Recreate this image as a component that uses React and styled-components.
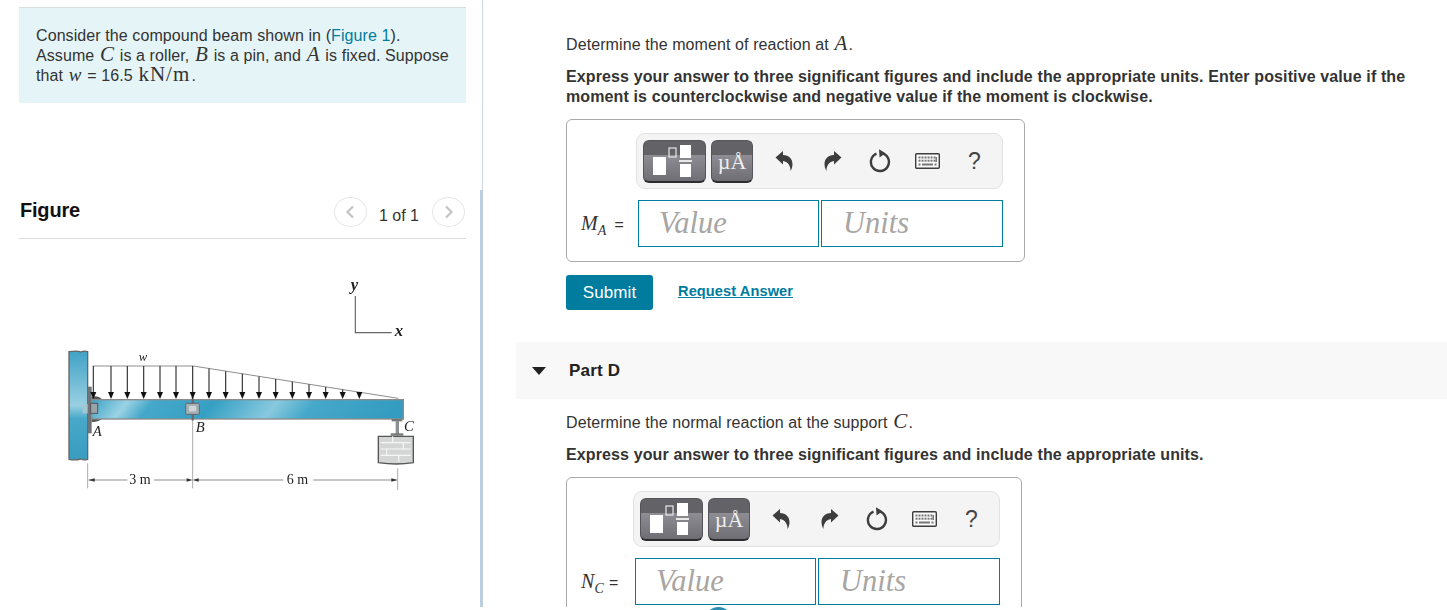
import React from "react";
import styled, { createGlobalStyle } from "styled-components";

const GlobalStyle = createGlobalStyle`
  html, body {
    margin: 0;
    padding: 0;
    background: #fff;
    overflow: hidden;
  }
  body {
    font-family: "Liberation Sans", Arial, sans-serif;
    font-size: 16px;
    line-height: 20px;
    letter-spacing: 0.09px;
    color: #333;
  }
`;

const Page = styled.div`
  width: 1447px;
  height: 607px;
  display: flex;
  overflow: hidden;
`;

const LeftColumn = styled.div`
  width: 483px;
  flex: none;
  box-sizing: border-box;
  padding: 7px 16px 0 19px;
  position: relative;
  border-right: 1px solid #c8d8e6;
  height: 607px;
`;

const RuleDark = styled.div`
  position: absolute;
  right: -1px;
  top: 190px;
  bottom: 0;
  width: 3px;
  background: #bccfe0;
`;

const Intro = styled.div`
  border-top: 1px solid #d9dfe0;
  background: #e5f5f7;
  height: 96px;
  box-sizing: border-box;
  padding: 18px 10px 0 17px;
  white-space: nowrap;
`;

const FigureHeader = styled.div`
  margin-top: 92px;
  height: 43px;
  display: flex;
  justify-content: space-between;
  border-bottom: 1px solid #d9dcdf;
`;

const FigureTitle = styled.div`
  font-size: 20px;
  font-weight: bold;
  letter-spacing: -0.2px;
  color: #111;
  margin: 5px 0 0 1px;
`;

const Pager = styled.div`
  display: flex;
  align-items: flex-start;
  font-size: 16px;
  letter-spacing: 0;
  margin-right: 1px;
`;

const PagerText = styled.span`
  margin: 11px 13px 0 12px;
`;

const PagerButton = styled.span`
  width: 31px;
  height: 28px;
  margin-top: 2px;
  border: 1px solid #e6e6e6;
  border-radius: 50%;
  display: flex;
  align-items: center;
  justify-content: center;
`;

const FigureWrap = styled.div`
  margin: 31px 0 0 21px;
  line-height: 0;
  svg {
    filter: blur(0.5px);
  }
`;

const RightColumn = styled.div`
  flex: 1;
  min-width: 0;
  padding: 25px 0 0 33px;
`;

const PartBody = styled.div`
  padding-left: 50px;
`;

const Prompt = styled.div`
  margin-top: ${(p) => p.$top}px;
`;

const Instruction = styled.div`
  margin-top: 12px;
  font-weight: bold;
  letter-spacing: 0.12px;
  width: 860px;
`;

const AnswerBox = styled.div`
  margin-top: 12px;
  display: inline-block;
  box-sizing: border-box;
  border: 1px solid #aaa;
  border-radius: 6px;
  padding: 13px 21px 14px 14px;
`;

const Toolbar = styled.div`
  width: 367px;
  height: 56px;
  box-sizing: border-box;
  margin-left: ${(p) => p.$labelWidth - 2}px;
  border: 1px solid #e2e2e2;
  border-radius: 9px;
  background: #f4f4f4;
  display: flex;
  align-items: center;
  padding: 0 0 0 6px;
`;

const PaletteButton = styled.div`
  width: ${(p) => p.$width}px;
  height: 43px;
  margin-right: 5px;
  box-sizing: border-box;
  border-radius: 6px;
  border: 1px solid #55545a;
  border-bottom: 2px solid #2d2d30;
  background: linear-gradient(
    #636267 0,
    #636267 14px,
    #8e8d94 14px,
    #6f6e74 100%
  );
  display: flex;
  align-items: center;
  justify-content: center;
  overflow: hidden;
`;

const MuGlyph = styled.span`
  font-family: "Liberation Serif", serif;
  font-size: 22px;
  letter-spacing: 0;
  line-height: 30px;
  color: #eee;
  margin-top: 3px;
`;

const ToolSlot = styled.span`
  width: ${(p) => p.$width}px;
  display: flex;
  justify-content: center;
  align-items: center;
`;

const Help = styled.span`
  font-size: 23px;
  color: #444;
  line-height: 24px;
`;

const InputRow = styled.div`
  display: flex;
  align-items: center;
  margin-top: 11px;
`;

const RowLabel = styled.div`
  width: ${(p) => p.$width}px;
  flex: none;
  box-sizing: border-box;
  font-family: "Liberation Serif", serif;
  font-size: 20px;
  font-style: italic;
  white-space: nowrap;
`;

const Sub = styled.sub`
  font-size: 14px;
  vertical-align: -5px;
  line-height: 0;
`;

const Equals = styled.span`
  font-family: "Liberation Sans", sans-serif;
  font-style: normal;
  font-size: 16px;
  margin-left: ${(p) => p.$gap}px;
`;

const Field = styled.span`
  width: ${(p) => p.$width}px;
  height: 47px;
  box-sizing: border-box;
  border: 1px solid #007c9e;
  margin-right: 2px;
  padding-left: ${(p) => p.$pad}px;
  font-family: "Liberation Serif", serif;
  font-style: italic;
  font-size: 30.5px;
  letter-spacing: 0;
  line-height: 45px;
  color: #a8a5a2;
  &:last-child {
    margin-right: 0;
  }
`;

const ActionRow = styled.div`
  display: flex;
  align-items: center;
  margin-top: 13px;
`;

const SubmitButton = styled.button`
  width: 87px;
  height: 35px;
  border: 0;
  border-radius: 3px;
  background: #007c9e;
  color: #fff;
  font: 17px "Liberation Sans", sans-serif;
  letter-spacing: 0.1px;
  padding: 0;
`;

const RequestLink = styled.a`
  margin: 0 0 4px 25px;
  font-size: 14.6px;
  font-weight: bold;
  color: #007c9e;
  text-decoration: underline;
`;

const PartBar = styled.div`
  margin-top: 32px;
  height: 57px;
  background: #f8f8f8;
  display: flex;
  align-items: center;
  padding-left: 16px;
`;

const PartTitle = styled.div`
  margin-left: 23px;
  font-size: 17px;
  font-weight: bold;
  letter-spacing: 0.2px;
  color: #222;
`;

const Mi = styled.span`
  font-family: "Liberation Serif", serif;
  font-style: ${(p) => (p.$upright ? "normal" : "italic")};
  font-size: ${(p) => p.$size || 21}px;
  letter-spacing: ${(p) => (p.$upright ? 1 : 0)}px;
  line-height: 0;
  margin: 0 1.2px;
`;

const InlineLink = styled.span`
  color: #007c9e;
`;

// top of a round control that sits just under the visible part of the page
const BottomArc = styled.div`
  position: absolute;
  left: 705px;
  top: 607px;
  width: 27px;
  height: 27px;
  border-radius: 50%;
  background: #2a8fb0;
`;

const Chevron = ({ left }) => (
  <svg width="10" height="14" viewBox="0 0 10 14">
    <path
      d={left ? "M8 1.5 L2.5 7 L8 12.5" : "M2 1.5 L7.5 7 L2 12.5"}
      fill="none"
      stroke="#c4c4c4"
      strokeWidth="2.2"
    />
  </svg>
);

const TemplateIcon = () => (
  <svg width="61" height="40" viewBox="0 0 61 40">
    <rect x="9" y="16" width="13" height="18" fill="#fff" />
    <rect x="25" y="7" width="7" height="9" fill="none" stroke="#e8e8e8" strokeWidth="1.2" />
    <rect x="36" y="4" width="11" height="13" fill="#fff" />
    <rect x="35" y="19" width="13" height="2" fill="#e8e8e8" />
    <rect x="36" y="23" width="11" height="13" fill="#fff" />
  </svg>
);

const UndoIcon = ({ flip }) => (
  <svg
    width="18"
    height="22"
    viewBox="0 0 18 22"
    style={flip ? { transform: "scaleX(-1)" } : undefined}
  >
    <path
      d="M0.5 7.5 L8 1 L8 5 C14 5 17.5 9 17.5 14 C17.5 17 16.5 19.5 15.5 21 C15.8 17 13.5 11.5 8 11 L8 14.5 Z"
      fill="#3d3d3d"
    />
  </svg>
);

const ResetIcon = () => (
  <svg width="22" height="24" viewBox="0 0 22 24">
    <path
      d="M13.5 4.4 A9 9 0 1 1 7.5 4.7"
      fill="none"
      stroke="#3d3d3d"
      strokeWidth="2.4"
    />
    <path d="M10 0.2 L16.5 4.2 L10.5 8.5 Z" fill="#3d3d3d" />
  </svg>
);

const KeyboardIcon = () => (
  <svg width="25" height="16" viewBox="0 0 25 16">
    <rect x="0.7" y="0.7" width="23.6" height="14.6" rx="1" fill="#fbfbfb" stroke="#3d3d3d" strokeWidth="1.4" />
    {[3.5, 6.5, 9.5, 12.5, 15.5, 18.5].map((x) => (
      <rect key={x} x={x} y="3.5" width="2" height="2" fill="#777" />
    ))}
    {[3.5, 6.5, 9.5, 12.5, 15.5, 18.5].map((x) => (
      <rect key={x} x={x} y="6.7" width="2" height="2" fill="#777" />
    ))}
    <rect x="3.5" y="10.5" width="2" height="2" fill="#777" />
    <rect x="7" y="10.5" width="11" height="2" fill="#777" />
    <rect x="19.5" y="10.5" width="2" height="2" fill="#777" />
    <rect x="20.5" y="4" width="1.5" height="5" fill="#777" />
  </svg>
);

const Tools = ({ labelWidth }) => (
  <Toolbar $labelWidth={labelWidth}>
    <PaletteButton $width={63}>
      <TemplateIcon />
    </PaletteButton>
    <PaletteButton $width={42}>
      <MuGlyph>µÅ</MuGlyph>
    </PaletteButton>
    <ToolSlot $width={51}>
      <UndoIcon />
    </ToolSlot>
    <ToolSlot $width={47}>
      <UndoIcon flip />
    </ToolSlot>
    <ToolSlot $width={48}>
      <ResetIcon />
    </ToolSlot>
    <ToolSlot $width={47}>
      <KeyboardIcon />
    </ToolSlot>
    <ToolSlot $width={47}>
      <Help>?</Help>
    </ToolSlot>
  </Toolbar>
);

const arrowXs = [160, 213, 262, 311, 360, 408, 458, 507, 557, 607, 657, 707, 757, 807, 857, 908, 958];

// load height falls linearly from B to the roller
const loadTop = (x) => (x <= 458 ? 288 : 288 + ((x - 458) / (1075 - 458)) * 97);

const BeamFigure = () => (
  <svg width="400" height="230" viewBox="0 0 1200 690">
    <defs>
      <linearGradient id="beamFill" x1="0" y1="0" x2="1" y2="0.05">
        <stop offset="0" stopColor="#3aa2c6" />
        <stop offset="0.12" stopColor="#9bd2e4" />
        <stop offset="0.2" stopColor="#45a8ca" />
        <stop offset="0.4" stopColor="#36a0c4" />
        <stop offset="0.6" stopColor="#88c9de" />
        <stop offset="0.72" stopColor="#46a8ca" />
        <stop offset="1" stopColor="#339cc0" />
      </linearGradient>
      <linearGradient id="wallFill" x1="0" y1="0" x2="0" y2="1">
        <stop offset="0" stopColor="#3fa2c5" />
        <stop offset="0.5" stopColor="#9ad0e2" />
        <stop offset="0.62" stopColor="#48a8c9" />
        <stop offset="1" stopColor="#389cc0" />
      </linearGradient>
    </defs>

    <path
      d="M87 245 Q115 241 122 246 Q132 241 143 245 L143 568 Q132 572 122 567 Q105 572 87 568 Z"
      fill="url(#wallFill)"
      stroke="#666"
      strokeWidth="4"
    />
    <rect x="143" y="350" width="12" height="140" fill="#6d7377" />
    <path d="M155 380 Q175 376 186 388 L155 388 Z M155 447 L186 447 Q172 458 155 455 Z" fill="#555" />
    <rect x="155" y="389" width="935" height="58" fill="url(#beamFill)" stroke="#8a8a8a" strokeWidth="4" />
    <rect x="152" y="400" width="21" height="30" fill="#9aa4a8" stroke="#555" strokeWidth="3" />
    <rect x="128" y="402" width="15" height="28" fill="#a5c5d0" />
    <rect x="455" y="380" width="6" height="72" fill="#666" />
    <rect x="437" y="400" width="41" height="33" rx="3" fill="#a5b0b5" stroke="#666" strokeWidth="3" />
    <rect x="447" y="408" width="21" height="16" fill="#d0d6d8" />

    <path d="M158 288 L460 288 L1075 385" fill="none" stroke="#777" strokeWidth="2.5" />
    {arrowXs.map((x) => (
      <g key={x}>
        <line x1={x} y1={loadTop(x)} x2={x} y2="372" stroke="#333" strokeWidth="3.5" />
        <path d={`M${x - 9} 366 L${x + 9} 366 L${x} 387 Z`} fill="#111" />
      </g>
    ))}

    <rect x="1055" y="447" width="32" height="7" fill="#777" />
    <rect x="1067" y="452" width="10" height="40" fill="#8a9094" />
    <rect x="1052" y="490" width="38" height="7" fill="#777" />
    <path
      d="M1015 499 L1120 499 L1120 578 Q1070 586 1015 578 Z"
      fill="#d4d6d6"
      stroke="#555"
      strokeWidth="4"
    />
    <path
      d="M1022 518 H1112 M1022 537 H1112 M1022 556 H1112 M1058 499 V518 M1090 518 V537 M1040 537 V556 M1076 556 V576"
      stroke="#f6f6f6"
      strokeWidth="3.5"
      fill="none"
    />

    <path d="M946 78 L946 188 L1055 188" fill="none" stroke="#666" strokeWidth="3.5" />

    <path d="M143 580 V655 M458 452 V655 M1073 595 V660" stroke="#999" strokeWidth="2.5" />
    <path
      d="M146 630 H262 M342 630 H446 M470 630 H730 M820 630 H1070"
      stroke="#777"
      strokeWidth="2.5"
    />
    <path d="M146 630 L164 625 L164 635 Z M458 630 L440 625 L440 635 Z M458 630 L476 625 L476 635 Z M1072 630 L1054 625 L1054 635 Z" fill="#333" />

    <g fontFamily="Liberation Serif, serif" fill="#222" letterSpacing="0">
      <text x="296" y="273" fontSize="38" fontStyle="italic">w</text>
      <text x="932" y="60" fontSize="50" fontStyle="italic" fontWeight="bold">y</text>
      <text x="1064" y="198" fontSize="50" fontStyle="italic" fontWeight="bold">x</text>
      <text x="158" y="497" fontSize="44" fontStyle="italic">A</text>
      <text x="467" y="487" fontSize="44" fontStyle="italic">B</text>
      <text x="1092" y="484" fontSize="44" fontStyle="italic">C</text>
      <text x="268" y="643" fontSize="42">3 m</text>
      <text x="740" y="643" fontSize="42">6 m</text>
    </g>
  </svg>
);

const App = () => (
  <>
    <GlobalStyle />
    <Page>
      <LeftColumn>
        <RuleDark />
        <Intro>
          Consider the compound beam shown in (<InlineLink>Figure 1</InlineLink>).
          <br />
          Assume <Mi>C</Mi> is a roller, <Mi>B</Mi> is a pin, and <Mi>A</Mi> is fixed. Suppose
          <br />
          that <Mi $size={19}>w</Mi> = 16.5 <Mi $upright>kN/m</Mi>.
        </Intro>
        <FigureHeader>
          <FigureTitle>Figure</FigureTitle>
          <Pager>
            <PagerButton>
              <Chevron left />
            </PagerButton>
            <PagerText>1 of 1</PagerText>
            <PagerButton>
              <Chevron />
            </PagerButton>
          </Pager>
        </FigureHeader>
        <FigureWrap>
          <BeamFigure />
        </FigureWrap>
      </LeftColumn>

      <RightColumn>
        <PartBody>
          <Prompt $top={10}>
            Determine the moment of reaction at <Mi>A</Mi>.
          </Prompt>
          <Instruction>
            Express your answer to three significant figures and include the appropriate units.
            Enter positive value if the moment is counterclockwise and negative value if the moment
            is clockwise.
          </Instruction>
          <AnswerBox>
            <Tools labelWidth={57} />
            <InputRow>
              <RowLabel $width={57}>
                M<Sub>A</Sub>
                <Equals $gap={8}>=</Equals>
              </RowLabel>
              <Field $width={181} $pad={20}>Value</Field>
              <Field $width={182} $pad={21}>Units</Field>
            </InputRow>
          </AnswerBox>
          <ActionRow>
            <SubmitButton>Submit</SubmitButton>
            <RequestLink>Request Answer</RequestLink>
          </ActionRow>
        </PartBody>

        <PartBar>
          <svg width="14" height="8" viewBox="0 0 14 8">
            <path d="M0 0 H14 L7 8 Z" fill="#222" />
          </svg>
          <PartTitle>Part D</PartTitle>
        </PartBar>

        <PartBody>
          <Prompt $top={14}>
            Determine the normal reaction at the support <Mi>C</Mi>.
          </Prompt>
          <Instruction>
            Express your answer to three significant figures and include the appropriate units.
          </Instruction>
          <AnswerBox>
            <Tools labelWidth={54} />
            <InputRow>
              <RowLabel $width={54}>
                N<Sub>C</Sub>
                <Equals $gap={5}>=</Equals>
              </RowLabel>
              <Field $width={181} $pad={20}>Value</Field>
              <Field $width={182} $pad={21}>Units</Field>
            </InputRow>
          </AnswerBox>
        </PartBody>
      </RightColumn>
    </Page>
    <BottomArc />
  </>
);

export default App;
